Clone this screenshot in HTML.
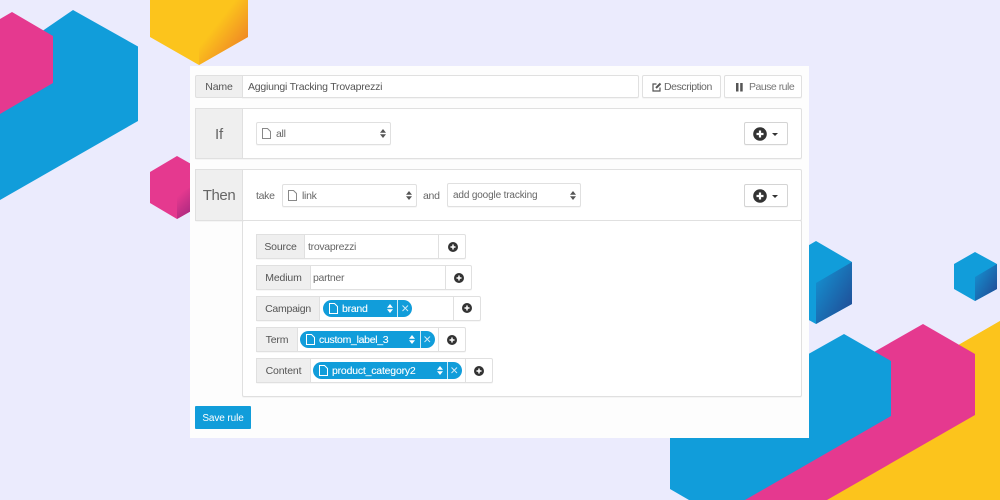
<!DOCTYPE html>
<html><head><meta charset="utf-8">
<style>
html,body{margin:0;padding:0}
body{width:1000px;height:500px;overflow:hidden;background:#ebebfd;position:relative;font-family:"Liberation Sans",sans-serif;color:#555}
.a{position:absolute;box-sizing:border-box}
.b{border:1px solid #e0e0e0;border-radius:2px;background:#fff;box-shadow:0 1px 0 rgba(0,0,0,.03)}
.g{background:#efefef;border:1px solid #e0e0e0;text-align:center;color:#555;letter-spacing:-.15px}
.t{position:absolute;white-space:nowrap;font-size:10.5px;line-height:14px;color:#666;letter-spacing:-.3px}
svg{position:absolute;overflow:visible}
.pill{position:absolute;height:17px;background:#119dda;border-radius:9px}
.pt{position:absolute;color:#fff;font-size:10.5px;line-height:19px;white-space:nowrap;letter-spacing:-.25px;-webkit-text-stroke:.1px #fff}
</style></head><body>
<svg width="1000" height="500" style="left:0;top:0">
<defs>
<linearGradient id="gy" gradientUnits="userSpaceOnUse" x1="222.200" y1="16.900" x2="248" y2="37"><stop offset="0" stop-color="#fcc41c"/><stop offset="1" stop-color="#f08a24"/></linearGradient>
<linearGradient id="gb" x1="0" y1="0" x2="1" y2="1"><stop offset=".1" stop-color="#1590d0"/><stop offset="1" stop-color="#21448f"/></linearGradient>
<linearGradient id="gp" gradientUnits="userSpaceOnUse" x1="174" y1="200" x2="190" y2="216"><stop offset="0" stop-color="#e5398f"/><stop offset="1" stop-color="#a8287f"/></linearGradient>
</defs>
<polygon points="73,10 138,46.500 138,121 0,200 0,60" fill="#119dda"/>
<polygon points="12,12 53,36 53,83 0,114 0,19" fill="#e5398f"/>
<polygon points="150,0 248,0 248,37 199,65 150,37" fill="#fcc41c"/>
<polygon points="199,8 213,0 248,0 248,37 199,65" fill="url(#gy)"/>
<polygon points="177,156 200,169 200,206 177,219 150,203 150,172" fill="#e5398f"/>
<polygon points="177,195 200,182 200,206 177,219" fill="url(#gp)"/>
<polygon points="816,241 852,262 852,304 816,324 780,304 780,262" fill="#119dda"/>
<polygon points="816,283 852,262 852,304 816,324" fill="url(#gb)"/>
<polygon points="975,252 997,264 997,289 975,301 954,289 954,264" fill="#119dda"/>
<polygon points="975,277 997,264 997,289 975,301" fill="url(#gb)"/>
<polygon points="1000,321 940,356 800,500 1000,500" fill="#fcc41c"/>
<polygon points="1000,321 880,390 827,500 1000,500" fill="#fcc41c"/>
<polygon points="923,324 975,354 975,415 827,500 745,500 800,400 874,352" fill="#e5398f"/>
<polygon points="844,334 891,361 891,416 745,500 689,500 670,489 670,420 780,370" fill="#119dda"/>
</svg>
<div class="a" style="left:190px;top:66px;width:619px;height:372px;background:#fdfdfd"></div>

<div class="a g" style="left:195px;top:75px;width:48px;height:23px;font-size:10.500px;line-height:23px;border-radius:2px 0 0 2px">Name</div>
<div class="a b" style="left:242px;top:75px;width:397px;height:23px;border-radius:0 2px 2px 0"></div>
<div class="t" style="left:248px;top:80px;color:#555;letter-spacing:-.22px">Aggiungi Tracking Trovaprezzi</div>
<div class="a b" style="left:642px;top:75px;width:79px;height:23px"></div>
<svg width="10" height="10" style="left:652px;top:82px"><path d="M8 5.500V9H1V2H4.500" fill="none" stroke="#555" stroke-width="1.200"/><path d="M4 6L8.500 1.500" stroke="#555" stroke-width="2"/></svg>
<div class="t" style="left:664px;top:80px;letter-spacing:-.42px">Description</div>
<div class="a b" style="left:724px;top:75px;width:78px;height:23px"></div>
<svg width="8" height="9" style="left:736px;top:83px"><rect x="0" y="0" width="2.500" height="8.500" fill="#555"/><rect x="4.200" y="0" width="2.500" height="8.500" fill="#555"/></svg>
<div class="t" style="left:749px;top:80px;color:#777;letter-spacing:-.5px">Pause rule</div>

<div class="a b" style="left:195px;top:108px;width:607px;height:51px"></div>
<div class="a g" style="left:195px;top:108px;width:48px;height:51px;font-size:15px;line-height:52px;color:#666">If</div>
<div class="a b" style="left:256px;top:122px;width:135px;height:23px"></div>
<svg width="10" height="12" style="left:262px;top:128px"><path d="M.5.500H5.500L8.500 3.500V10.500H.5Z" fill="none" stroke="#888"/></svg>
<div class="t" style="left:276px;top:127px">all</div>
<svg width="6" height="9" style="left:380px;top:129px"><path d="M3 0L6 3.700H0ZM3 9L6 5.300H0Z" fill="#555"/></svg>
<div class="a b" style="left:744px;top:122px;width:44px;height:23px;border-color:#d4d4d4"></div>
<svg width="14" height="14" style="left:753px;top:127px"><circle cx="7" cy="7" r="6.800" fill="#333"/><path d="M7 3.500V10.500M3.500 7H10.500" stroke="#fff" stroke-width="2.200"/></svg>
<svg width="6" height="3" style="left:772px;top:133px"><path d="M0 0H6L3 3Z" fill="#333"/></svg>

<div class="a b" style="left:195px;top:169px;width:607px;height:52px"></div>
<div class="a g" style="left:195px;top:169px;width:48px;height:52px;font-size:15px;line-height:52px;color:#666;letter-spacing:-.4px">Then</div>
<div class="t" style="left:256px;top:189px">take</div>
<div class="a b" style="left:282px;top:184px;width:135px;height:23px"></div>
<svg width="10" height="12" style="left:288px;top:190px"><path d="M.5.500H5.500L8.500 3.500V10.500H.5Z" fill="none" stroke="#888"/></svg>
<div class="t" style="left:302px;top:189px">link</div>
<svg width="6" height="9" style="left:406px;top:191px"><path d="M3 0L6 3.700H0ZM3 9L6 5.300H0Z" fill="#555"/></svg>
<div class="t" style="left:423px;top:189px">and</div>
<div class="a b" style="left:447px;top:183px;width:134px;height:24px"></div>
<div class="t" style="left:453px;top:189px;font-size:10px;letter-spacing:-.15px">add google tracking</div>
<svg width="6" height="9" style="left:570px;top:191px"><path d="M3 0L6 3.700H0ZM3 9L6 5.300H0Z" fill="#555"/></svg>
<div class="a b" style="left:744px;top:184px;width:44px;height:23px;border-color:#d4d4d4"></div>
<svg width="14" height="14" style="left:753px;top:189px"><circle cx="7" cy="7" r="6.800" fill="#333"/><path d="M7 3.500V10.500M3.500 7H10.500" stroke="#fff" stroke-width="2.200"/></svg>
<svg width="6" height="3" style="left:772px;top:195px"><path d="M0 0H6L3 3Z" fill="#333"/></svg>

<div class="a b" style="left:242px;top:220px;width:560px;height:177px"></div>

<!-- Source -->
<div class="a b" style="left:256px;top:234px;width:210px;height:25px"></div>
<div class="a g" style="left:256px;top:234px;width:49px;height:25px;font-size:10.500px;line-height:25px">Source</div>
<div class="t" style="left:308px;top:240px">trovaprezzi</div>
<div class="a" style="left:438px;top:234px;width:1px;height:25px;background:#e0e0e0"></div>
<svg width="10" height="10" style="left:447.500px;top:241.500px"><circle cx="5" cy="5" r="5" fill="#333"/><path d="M5 2.500V7.500M2.500 5H7.500" stroke="#fff" stroke-width="1.500"/></svg>
<!-- Medium -->
<div class="a b" style="left:256px;top:265px;width:216px;height:25px"></div>
<div class="a g" style="left:256px;top:265px;width:55px;height:25px;font-size:10.500px;line-height:25px">Medium</div>
<div class="t" style="left:313px;top:271px">partner</div>
<div class="a" style="left:445px;top:265px;width:1px;height:25px;background:#e0e0e0"></div>
<svg width="10" height="10" style="left:453.500px;top:272.500px"><circle cx="5" cy="5" r="5" fill="#333"/><path d="M5 2.500V7.500M2.500 5H7.500" stroke="#fff" stroke-width="1.500"/></svg>
<!-- Campaign -->
<div class="a b" style="left:256px;top:296px;width:225px;height:25px"></div>
<div class="a g" style="left:256px;top:296px;width:64px;height:25px;font-size:10.500px;line-height:25px;letter-spacing:-.25px">Campaign</div>
<div class="pill" style="left:323px;top:300px;width:89px"></div>
<svg width="10" height="12" style="left:329px;top:302.500px"><path d="M.5.500H5.500L8.500 3.500V10.500H.5Z" fill="none" stroke="#fff"/></svg>
<div class="pt" style="left:342px;top:300px">brand</div>
<svg width="6" height="9" style="left:387px;top:304px"><path d="M3 0L6 3.700H0ZM3 9L6 5.300H0Z" fill="#fff"/></svg>
<div class="a" style="left:397px;top:300px;width:1px;height:17px;background:#cfeaf6"></div>
<svg width="7" height="7" style="left:402px;top:305px"><path d="M.5.500L6 6M6 .5L.5 6" stroke="#cfeaf6" stroke-width="1"/></svg>
<div class="a" style="left:453px;top:296px;width:1px;height:25px;background:#e0e0e0"></div>
<svg width="10" height="10" style="left:462px;top:303px"><circle cx="5" cy="5" r="5" fill="#333"/><path d="M5 2.500V7.500M2.500 5H7.500" stroke="#fff" stroke-width="1.500"/></svg>
<!-- Term -->
<div class="a b" style="left:256px;top:327px;width:210px;height:25px"></div>
<div class="a g" style="left:256px;top:327px;width:42px;height:25px;font-size:10.500px;line-height:25px">Term</div>
<div class="pill" style="left:300px;top:331px;width:135px"></div>
<svg width="10" height="12" style="left:306px;top:333.500px"><path d="M.5.500H5.500L8.500 3.500V10.500H.5Z" fill="none" stroke="#fff"/></svg>
<div class="pt" style="left:319px;top:331px;letter-spacing:-.3px">custom_label_3</div>
<svg width="6" height="9" style="left:409px;top:335px"><path d="M3 0L6 3.700H0ZM3 9L6 5.300H0Z" fill="#fff"/></svg>
<div class="a" style="left:420px;top:331px;width:1px;height:17px;background:#cfeaf6"></div>
<svg width="7" height="7" style="left:424px;top:336px"><path d="M.5.500L6 6M6 .5L.5 6" stroke="#cfeaf6" stroke-width="1"/></svg>
<div class="a" style="left:438px;top:327px;width:1px;height:25px;background:#e0e0e0"></div>
<svg width="10" height="10" style="left:446.500px;top:334.500px"><circle cx="5" cy="5" r="5" fill="#333"/><path d="M5 2.500V7.500M2.500 5H7.500" stroke="#fff" stroke-width="1.500"/></svg>
<!-- Content -->
<div class="a b" style="left:256px;top:358px;width:237px;height:25px"></div>
<div class="a g" style="left:256px;top:358px;width:55px;height:25px;font-size:10.500px;line-height:25px">Content</div>
<div class="pill" style="left:313px;top:362px;width:149px"></div>
<svg width="10" height="12" style="left:319px;top:364.500px"><path d="M.5.500H5.500L8.500 3.500V10.500H.5Z" fill="none" stroke="#fff"/></svg>
<div class="pt" style="left:332px;top:362px;letter-spacing:-.2px">product_category2</div>
<svg width="6" height="9" style="left:437px;top:366px"><path d="M3 0L6 3.700H0ZM3 9L6 5.300H0Z" fill="#fff"/></svg>
<div class="a" style="left:447px;top:362px;width:1px;height:17px;background:#cfeaf6"></div>
<svg width="7" height="7" style="left:451px;top:367px"><path d="M.5.500L6 6M6 .5L.5 6" stroke="#cfeaf6" stroke-width="1"/></svg>
<div class="a" style="left:465px;top:358px;width:1px;height:25px;background:#e0e0e0"></div>
<svg width="10" height="10" style="left:474px;top:365.500px"><circle cx="5" cy="5" r="5" fill="#333"/><path d="M5 2.500V7.500M2.500 5H7.500" stroke="#fff" stroke-width="1.500"/></svg>

<div class="a" style="left:195px;top:406px;width:56px;height:23px;background:#119dda;border-radius:1px;color:#fff;font-size:10px;line-height:25px;text-align:center;letter-spacing:-.1px">Save rule</div>
</body></html>
